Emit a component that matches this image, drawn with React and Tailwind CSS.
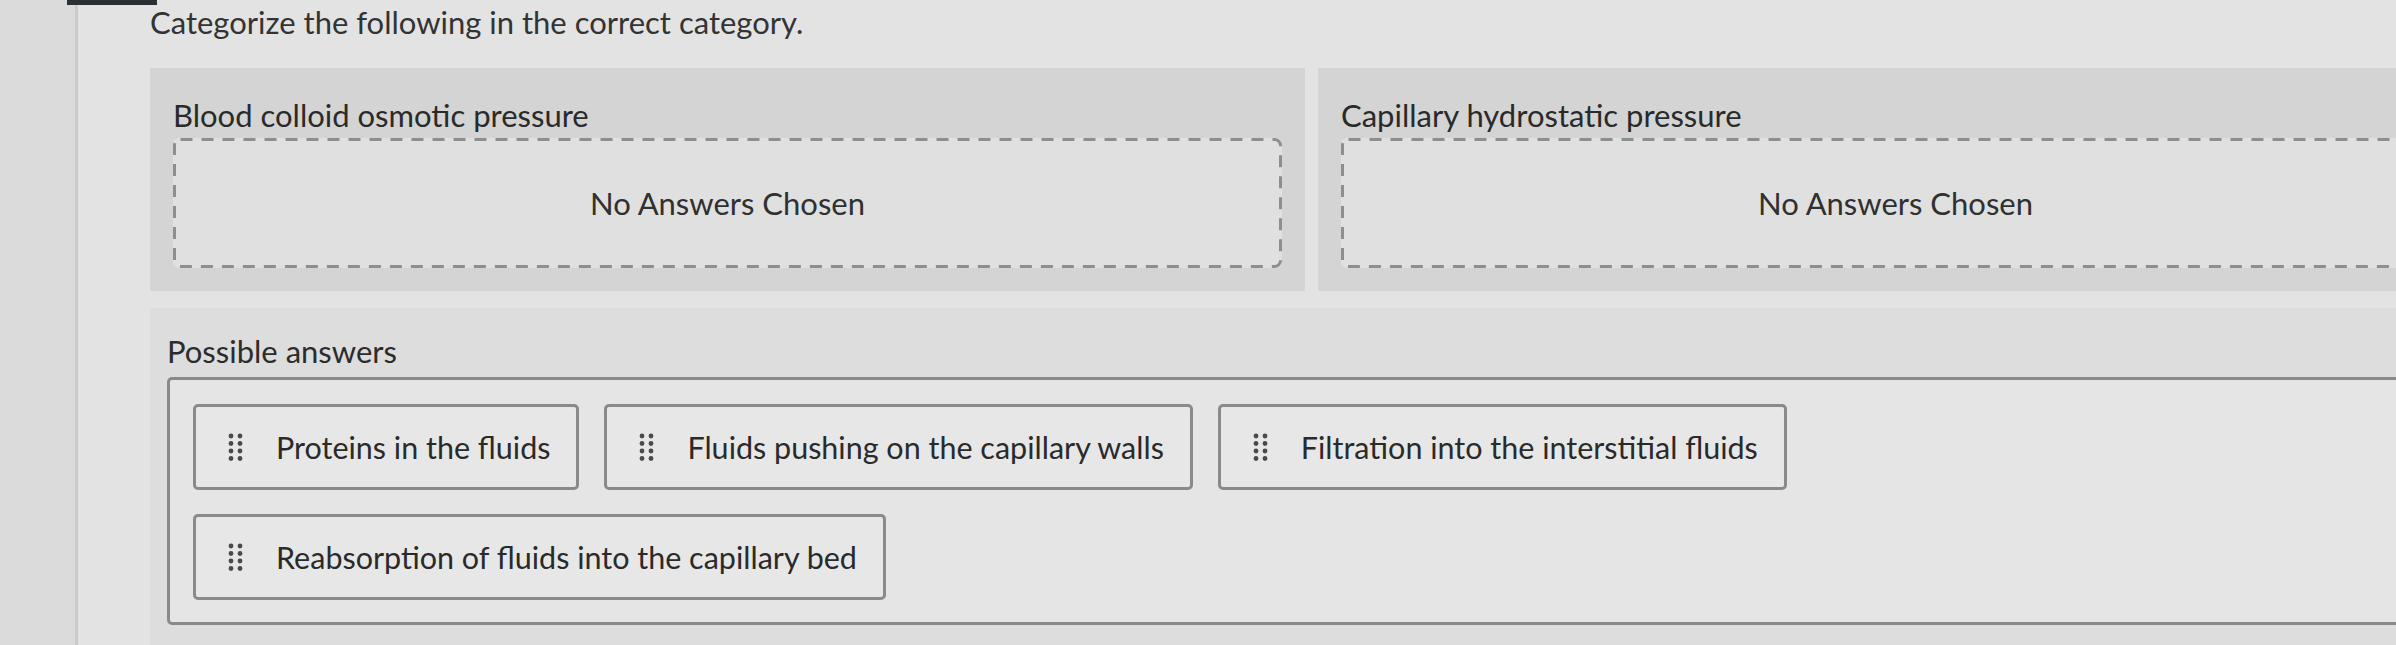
import React from "react";

const font = { fontFamily: "Lato, 'Open Sans', sans-serif" };

const categories = [
  { id: "colloid", title: "Blood colloid osmotic pressure" },
  { id: "hydro", title: "Capillary hydrostatic pressure" },
];

const answers = [
  ["Proteins in the fluids", "Fluids pushing on the capillary walls", "Filtration into the interstitial fluids"],
  ["Reabsorption of fluids into the capillary bed"],
];

function Handle() {
  return (
    <svg width="18" height="30" viewBox="0 0 18 30" className="shrink-0">
      {[4, 11.5, 19, 26.5].map((y) =>
        [4, 13].map((x) => <circle key={`${x}-${y}`} cx={x} cy={y} r="2.4" fill="#4a4a4a" />)
      )}
    </svg>
  );
}

function Chip({ text }) {
  return (
    <div className="flex items-center h-[86px] pl-[31px] pr-[26px] border-[3px] border-[#8a8a8a] rounded-[5px] bg-[#e7e7e7]">
      <Handle />
      <span className="ml-[31px] text-[30.5px] leading-[36px] text-[#2a2a2a] whitespace-nowrap">{text}</span>
    </div>
  );
}

function DropZone() {
  return (
    <div className="relative mt-[5px] h-[130px] rounded-[6px] bg-[#e0e0e0] flex items-center justify-center">
      <svg className="absolute inset-0 w-full h-full pointer-events-none">
        <rect
          x="1.5"
          y="1.5"
          rx="6"
          className="w-[calc(100%-3px)] h-[calc(100%-3px)]"
          fill="none"
          stroke="#8e8e8e"
          strokeWidth="3"
          strokeDasharray="12 9"
        />
      </svg>
      <span className="text-[31px] leading-[36px] text-[#303030]">No Answers Chosen</span>
    </div>
  );
}

function CategoryPanel({ title }) {
  return (
    <div className="w-[1155px] shrink-0 bg-[#d4d4d4] pt-[29px] pb-[23px] px-[23px]">
      <div className="text-[31px] leading-[36px] text-[#2a2a2a]">{title}</div>
      <DropZone />
    </div>
  );
}

export default function App() {
  return (
    <div className="relative w-[2396px] h-[645px] overflow-hidden flex bg-[#e3e3e3]" style={font}>
      <div className="absolute top-0 left-[67px] w-[90px] h-[5px] bg-[#2b3034]" />
      <div className="w-[78px] shrink-0 bg-[#dbdbdb] border-r-[3px] border-[#cbcbcb]" />
      <div className="pl-[72px] shrink-0 w-[2400px]">
        <div className="pt-[4px] text-[31px] leading-[36px] text-[#333333]">
          Categorize the following in the correct category.
        </div>
        <div className="mt-[28px] flex gap-[13px]">
          {categories.map((c) => (
            <CategoryPanel key={c.id} title={c.title} />
          ))}
        </div>
        <div className="mt-[17px] bg-[#dddddd] pl-[17px] pt-[25px] h-[400px]">
          <div className="text-[31px] leading-[36px] text-[#2c2c2c]">Possible answers</div>
          <div className="mt-[8px] border-[3px] border-[#8a8a8a] rounded-[5px] bg-[#e5e5e5] pt-[24px] pb-[22px] px-[23px] flex flex-col gap-[24px]">
            {answers.map((row, i) => (
              <div key={i} className="flex gap-[25px]">
                {row.map((a) => (
                  <Chip key={a} text={a} />
                ))}
              </div>
            ))}
          </div>
        </div>
      </div>
    </div>
  );
}
